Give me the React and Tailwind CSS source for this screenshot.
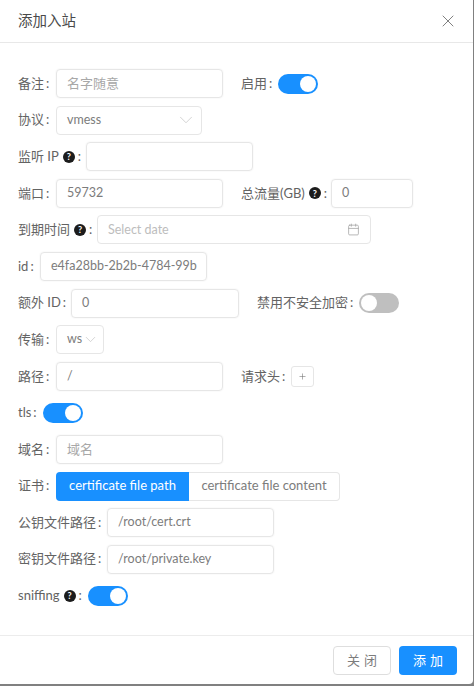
import { ChevronDown, Calendar, X, Plus } from "lucide-react";

const Help = () => (
  <span className="inline-flex w-[12px] h-[12px] ml-[4px] mr-[3px] items-center justify-center rounded-full bg-[#1c1c1c] text-white text-[9px] font-bold leading-none">
    ?
  </span>
);

const Field = ({ width, value, placeholder }) => (
  <div
    className={`h-[29px] ${width} flex items-center border border-[#e6e6e6] rounded-[4px] pl-[10px] shadow-[0_0_2px_#efefef] ${
      placeholder ? "text-[13px] text-[#a8a8a8]" : "text-[12.5px] text-[#7c7c7c]"
    } whitespace-nowrap`}
  >
    {value}
  </div>
);

const Label = ({ children, help, w }) => (
  <span className={`${w} shrink-0 flex items-center text-[13px] text-[#636363] whitespace-nowrap`}>
    {children}
    {help && <Help />}
    <span className={help ? "" : "ml-[2px]"}>:</span>
  </span>
);

const Toggle = ({ on = true }) => (
  <div
    className={`w-[40px] h-[20px] rounded-full p-[2px] flex items-center ${
      on ? "bg-[#1890ff] justify-end" : "bg-[#bfbfbf] justify-start"
    }`}
  >
    <div className="w-[16px] h-[16px] rounded-full bg-white" />
  </div>
);

const Row = ({ children }) => (
  <div className="h-[29px] mb-[7.6px] flex items-center">{children}</div>
);

export default function App() {
  return (
    <div
      className="w-[474px] h-[686px] bg-[#808080] overflow-hidden"
      style={{ fontFamily: 'Lato, "Noto Sans CJK SC", sans-serif' }}
    >
      <div className="w-[473px] h-[684px] bg-white rounded-br-[4px] flex flex-col">
        <div className="h-[43px] shrink-0 flex items-center justify-between pl-[18px] pr-[15px] border-b border-[#e8e8e8]">
          <span className="text-[14.5px] text-[#4a4a4a]">添加入站</span>
          <X className="w-[20px] h-[20px] text-[#808080]" strokeWidth={1.2} />
        </div>

        <div className="flex-1 pl-[18px] pt-[26px]">
          <Row>
            <Label w="w-[38px]">备注</Label>
            <Field width="w-[167px]" value="名字随意" placeholder />
            <span className="ml-[18px]" />
            <Label w="w-[37px]">启用</Label>
            <Toggle />
          </Row>
          <Row>
            <Label w="w-[38px]">协议</Label>
            <div className="h-[29px] w-[146px] flex items-center justify-between border border-[#e6e6e6] rounded-[4px] pl-[10px] pr-[4px] text-[12.5px] text-[#7c7c7c]">
              vmess
              <ChevronDown className="w-[22px] h-[22px] text-[#c4c4c4]" strokeWidth={0.8} />
            </div>
          </Row>
          <Row>
            <Label w="w-[68px]" help>
              监听 IP
            </Label>
            <Field width="w-[167px]" value="" />
          </Row>
          <Row>
            <Label w="w-[38px]">端口</Label>
            <Field width="w-[167px]" value="59732" />
            <span className="ml-[18px]" />
            <Label w="w-[90px]" help>
              总流量(GB)
            </Label>
            <Field width="w-[82px]" value="0" />
          </Row>
          <Row>
            <Label w="w-[79px]" help>
              到期时间
            </Label>
            <div className="h-[29px] w-[274px] flex items-center justify-between border border-[#e6e6e6] rounded-[4px] pl-[10px] pr-[10px] text-[12.5px] text-[#bdbdbd]">
              Select date
              <Calendar className="w-[13px] h-[13px] text-[#a8a8a8]" strokeWidth={1.5} />
            </div>
          </Row>
          <Row>
            <Label w="w-[22px]">id</Label>
            <Field width="w-[167px]" value="e4fa28bb-2b2b-4784-99b" />
          </Row>
          <Row>
            <Label w="w-[53px]">额外 ID</Label>
            <Field width="w-[168px]" value="0" />
            <span className="ml-[18px]" />
            <Label w="w-[102px]">禁用不安全加密</Label>
            <Toggle on={false} />
          </Row>
          <Row>
            <Label w="w-[38px]">传输</Label>
            <div className="h-[29px] w-[48px] flex items-center border border-[#e6e6e6] rounded-[4px] pl-[10px] text-[12.5px] text-[#7c7c7c]">
              ws
              <ChevronDown className="w-[17px] h-[17px] text-[#c4c4c4]" strokeWidth={1} />
            </div>
          </Row>
          <Row>
            <Label w="w-[38px]">路径</Label>
            <Field width="w-[167px]" value="/" />
            <span className="ml-[18px]" />
            <Label w="w-[50px]">请求头</Label>
            <div className="w-[23px] h-[21px] flex items-center justify-center border border-[#e6e6e6] rounded-[3px] text-[#707070]">
              <Plus className="w-[9px] h-[9px]" strokeWidth={1.5} />
            </div>
          </Row>
          <Row>
            <Label w="w-[25px]">tls</Label>
            <Toggle />
          </Row>
          <Row>
            <Label w="w-[38px]">域名</Label>
            <Field width="w-[167px]" value="域名" placeholder />
          </Row>
          <Row>
            <Label w="w-[38px]">证书</Label>
            <div className="h-[29px] w-[133px] flex items-center justify-center rounded-l-[4px] bg-[#1890ff] text-white text-[13px]">
              certificate file path
            </div>
            <div className="h-[29px] w-[151px] flex items-center justify-center border border-l-0 border-[#e6e6e6] rounded-r-[4px] text-[#7c7c7c] text-[13px]">
              certificate file content
            </div>
          </Row>
          <Row>
            <Label w="w-[89px]">公钥文件路径</Label>
            <Field width="w-[167px]" value="/root/cert.crt" />
          </Row>
          <Row>
            <Label w="w-[89px]">密钥文件路径</Label>
            <Field width="w-[167px]" value="/root/private.key" />
          </Row>
          <Row>
            <Label w="w-[70px]" help>
              sniffing
            </Label>
            <Toggle />
          </Row>
        </div>

        <div className="h-[49px] shrink-0 flex items-start justify-end gap-[8px] pr-[16px] pt-[10px] border-t border-[#ececec]">
          <div className="w-[58px] h-[29px] flex items-center justify-center border border-[#dedede] rounded-[4px] text-[13px] text-[#7c7c7c] tracking-[4px] pl-[4px]">
            关闭
          </div>
          <div className="w-[58px] h-[29px] flex items-center justify-center rounded-[4px] bg-[#1890ff] text-[13px] text-white tracking-[4px] pl-[4px]">
            添加
          </div>
        </div>
      </div>
    </div>
  );
}
